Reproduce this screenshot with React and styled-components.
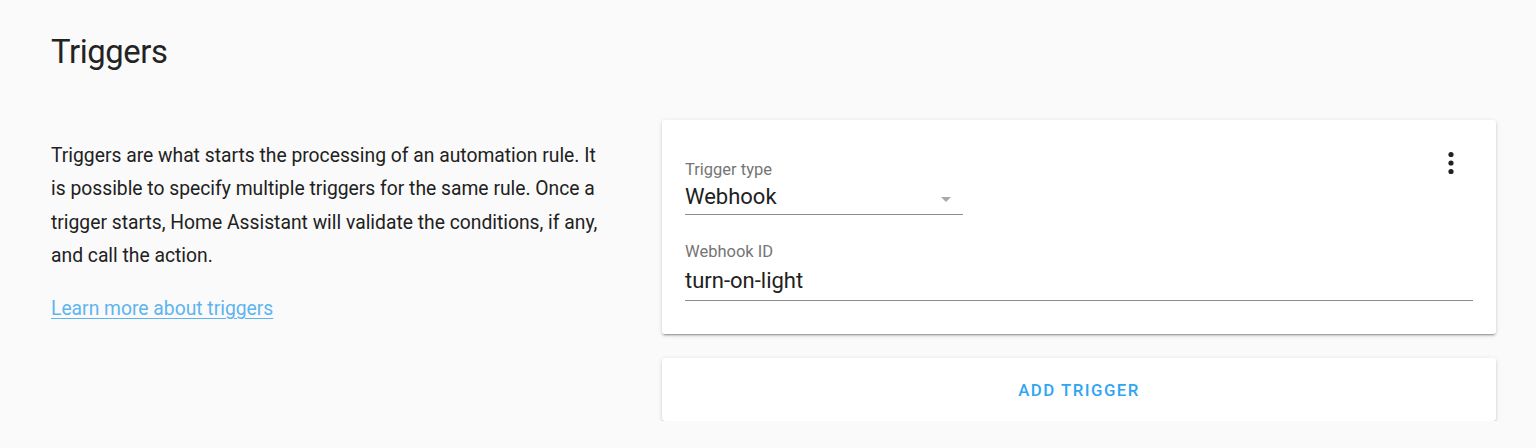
import React from "react";
import styled, { createGlobalStyle } from "styled-components";

const Global = createGlobalStyle`
  html, body { margin: 0; padding: 0; background: #fafafa; }
  body { font-family: Roboto, "Noto Sans", "Liberation Sans", sans-serif; color: #212121; -webkit-font-smoothing: antialiased; }
  * { box-sizing: border-box; }
`;

const Page = styled.div`
  padding: 32px 40px 0 51px;
`;

const Heading = styled.h1`
  margin: 0;
  font-size: 32.8px;
  line-height: 40px;
  font-weight: 400;
  letter-spacing: -0.012em;
  color: #232323;
`;

const Section = styled.div`
  display: flex;
  align-items: flex-start;
  gap: 53px;
  margin-top: 48px;
`;

const Intro = styled.div`
  flex: 0 0 558px;
  padding-top: 19px;
`;

const Paragraph = styled.p`
  margin: 0;
  font-size: 19.3px;
  line-height: 33.3px;
  color: #212121;
`;

const LearnLink = styled.a`
  display: inline-block;
  margin-top: 20px;
  font-size: 19.3px;
  line-height: 33px;
  color: #5db4ef;
  text-decoration: underline;
  text-underline-offset: 3px;
  cursor: pointer;
`;

const Cards = styled.div`
  flex: 1;
  display: flex;
  flex-direction: column;
  gap: 24px;
`;

const Card = styled.div`
  background: #fff;
  border-radius: 3px;
  box-shadow: 0 2px 2px 0 rgba(0, 0, 0, 0.14), 0 1px 5px 0 rgba(0, 0, 0, 0.12),
    0 3px 1px -2px rgba(0, 0, 0, 0.2);
`;

const CardBody = styled.div`
  padding: 40px 23px 33px 23px;
  display: flex;
  flex-direction: column;
  gap: 27px;
`;

const TopRow = styled.div`
  display: flex;
  justify-content: space-between;
  align-items: flex-start;
`;

const Field = styled.div`
  width: ${(p) => (p.$width ? `${p.$width}px` : "100%")};
  border-bottom: 1px solid #8c8c8c;
`;

const Label = styled.label`
  display: block;
  font-size: 16.5px;
  line-height: 20px;
  color: #757575;
`;

const Value = styled.div`
  display: flex;
  align-items: center;
  justify-content: space-between;
  font-size: 22px;
  line-height: ${(p) => p.$lh}px;
  height: ${(p) => p.$lh}px;
  color: #212121;
`;

const Arrow = styled.svg`
  width: 24px;
  height: 24px;
  margin-right: 5px;
  margin-top: 4px;
  fill: #a9a9a9;
`;

const MenuButton = styled.button`
  width: 44px;
  height: 44px;
  margin-top: -19px;
  padding: 0;
  border: 0;
  background: transparent;
  display: flex;
  align-items: center;
  justify-content: center;
  cursor: pointer;
`;

const ActionCard = styled(Card)`
  display: flex;
  justify-content: center;
  padding: 22px 0 21px;
`;

const AddButton = styled.button`
  border: 0;
  background: transparent;
  padding: 0;
  font-family: inherit;
  font-size: 16.8px;
  line-height: 20px;
  font-weight: 500;
  letter-spacing: 0.089em;
  text-transform: uppercase;
  color: #2ea6f2;
  cursor: pointer;
`;

export default function App() {
  return (
    <>
      <Global />
      <Page>
        <Heading>Triggers</Heading>
        <Section>
          <Intro>
            <Paragraph>
              Triggers are what starts the processing of an automation rule. It
              is possible to specify multiple triggers for the same rule. Once a
              trigger starts, Home Assistant will validate the conditions, if
              any, and call the action.
            </Paragraph>
            <LearnLink>Learn more about triggers</LearnLink>
          </Intro>
          <Cards>
            <Card>
              <CardBody>
                <TopRow>
                  <Field $width={278}>
                    <Label>Trigger type</Label>
                    <Value $lh={34}>
                      <span>Webhook</span>
                      <Arrow viewBox="0 0 24 24">
                        <path d="M7 10l5 5 5-5z" />
                      </Arrow>
                    </Value>
                  </Field>
                  <MenuButton aria-label="menu">
                    <svg width="26" height="26" viewBox="0 0 26 26">
                      <circle cx="13" cy="4.5" r="2.6" fill="#212121" />
                      <circle cx="13" cy="13" r="2.6" fill="#212121" />
                      <circle cx="13" cy="21.5" r="2.6" fill="#212121" />
                    </svg>
                  </MenuButton>
                </TopRow>
                <Field>
                  <Label>Webhook ID</Label>
                  <Value $lh={38}>
                    <span>turn-on-light</span>
                  </Value>
                </Field>
              </CardBody>
            </Card>
            <ActionCard>
              <AddButton>Add trigger</AddButton>
            </ActionCard>
          </Cards>
        </Section>
      </Page>
    </>
  );
}
